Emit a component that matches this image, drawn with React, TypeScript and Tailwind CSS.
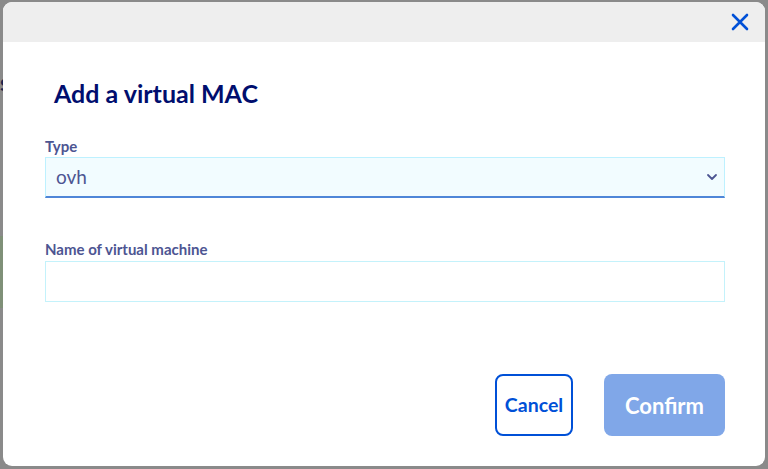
import React from 'react';

const font = { fontFamily: 'Lato, "Noto Sans", sans-serif' };

export default function App() {
  return (
    <div className="w-[768px] h-[469px] bg-[#8a8a8a] overflow-hidden relative" style={font}>
      {/* page behind the backdrop */}
      <div className="absolute left-0 top-[236px] w-[4px] h-[72px] bg-[#7f9078]" />
      <div className="absolute left-0 top-[72px] text-[22px] font-bold leading-none text-[#1b2550]">s</div>

      <div className="relative ml-[3px] mt-[2px] w-[762px] h-[464px] bg-white rounded-[9px] overflow-hidden flex flex-col">
        <div className="h-[40px] bg-[#eeeeee] flex items-center justify-end pr-[14px]">
          <button className="w-[22px] h-[22px] flex items-center justify-center text-[#0050d7]">
            <svg width="18" height="18" viewBox="0 0 18 18" fill="none" stroke="currentColor" strokeWidth="2.6" strokeLinecap="round">
              <path d="M2 2 L16 16 M16 2 L2 16" />
            </svg>
          </button>
        </div>

        <div className="flex flex-col pl-[42px] pr-[40px] pt-[36px] flex-1">
          <h1 className="ml-[9px] text-[25px] leading-[30px] font-bold text-[#000e6e]">Add a virtual MAC</h1>

          <label className="mt-[29px] text-[15px] leading-[18px] font-bold text-[#4d5592]">Type</label>
          <div className="mt-[2px] h-[41px] bg-[#f2fcff] border border-[#bef1ff] border-b-2 border-b-[#4f86d8] flex items-center justify-between pl-[10px] pr-[6px]">
            <span className="text-[19px] text-[#4d5592]">ovh</span>
            <svg width="12" height="8" viewBox="0 0 12 8" fill="none" stroke="#4d5592" strokeWidth="1.8" strokeLinecap="round" strokeLinejoin="round">
              <path d="M2 2 L6 6 L10 2" />
            </svg>
          </div>

          <label className="mt-[42px] text-[15px] leading-[18px] font-bold text-[#4d5592]">Name of virtual machine</label>
          <div className="mt-[3px] h-[41px] bg-white border border-[#c4f2fb]" />

          <div className="mt-[72px] flex justify-end gap-[31px]">
            <button className="w-[78px] h-[62px] rounded-[8px] border-2 border-[#0050d7] bg-white text-[#0050d7] text-[19.5px] font-bold">
              Cancel
            </button>
            <button className="w-[121px] h-[62px] rounded-[8px] bg-[#80a7e8] text-white text-[22px] font-bold">
              Confirm
            </button>
          </div>
        </div>
      </div>
    </div>
  );
}
